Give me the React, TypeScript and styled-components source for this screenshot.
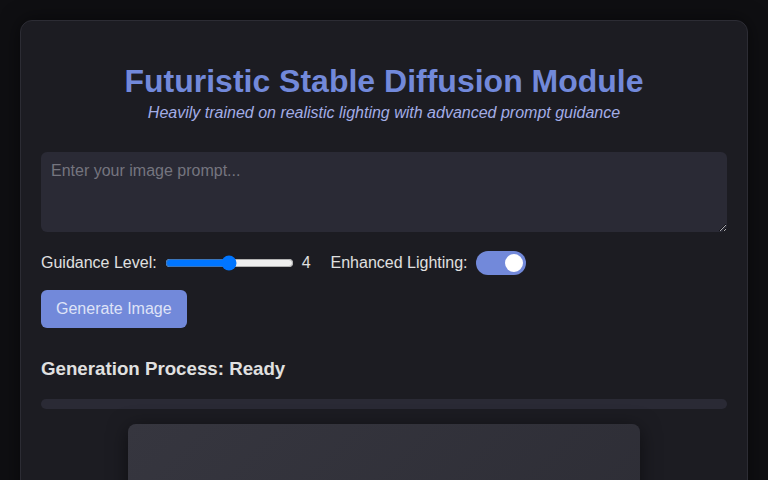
import React from 'react';
import styled, { createGlobalStyle } from 'styled-components';

const GlobalStyle = createGlobalStyle`
  html, body {
    margin: 0;
    padding: 0;
    background: #0f0f12;
    color: #e0e0e0;
    font-family: "Liberation Sans", Arial, sans-serif;
  }
  * { box-sizing: border-box; }
`;

const Page = styled.div`
  padding: 20px;
  min-height: 480px;
`;

const Card = styled.div`
  background: #1c1c22;
  border: 1px solid #2c2c34;
  border-radius: 12px;
  padding: 32px 20px 20px;
  box-shadow: 0 0 20px rgba(0, 0, 0, 0.5);
`;

const Header = styled.header`
  text-align: center;
  margin-bottom: 30px;
`;

const Title = styled.h1`
  margin: 10px 0 4px;
  font-size: 32px;
  font-weight: 700;
  color: #7289da;
`;

const Subtitle = styled.p`
  margin: 0;
  font-style: italic;
  font-size: 16px;
  color: #a3ade6;
`;

const Prompt = styled.textarea`
  display: block;
  width: 100%;
  height: 80px;
  padding: 10px;
  border: none;
  border-radius: 6px;
  background: #2a2a35;
  color: #e0e0e0;
  font-family: "Liberation Sans", Arial, sans-serif;
  font-size: 16px;
  resize: vertical;

  &::placeholder { color: #75757f; }
  &:focus { outline: none; }
`;

const Controls = styled.div`
  display: flex;
  align-items: center;
  gap: 20px;
  margin: 19px 0 15px;
`;

const Control = styled.label`
  display: flex;
  align-items: center;
  gap: 8px;
  font-size: 16px;
  color: #e0e0e0;
`;

const Range = styled.input`
  width: 129px;
  margin: 0;
`;

const Switch = styled.span<{ $on: boolean }>`
  position: relative;
  display: inline-block;
  width: 50px;
  height: 24px;
  border-radius: 12px;
  background: ${(p) => (p.$on ? '#7289da' : '#44444f')};
  cursor: pointer;

  &::after {
    content: '';
    position: absolute;
    top: 3px;
    left: ${(p) => (p.$on ? '29px' : '3px')};
    width: 18px;
    height: 18px;
    border-radius: 50%;
    background: #fff;
  }
`;

const Button = styled.button`
  padding: 10px 15px;
  border: none;
  border-radius: 6px;
  background: #7289da;
  color: #dfe3f7;
  font-family: "Liberation Sans", Arial, sans-serif;
  font-size: 16px;
  cursor: pointer;
`;

const StatusTitle = styled.h3`
  margin: 30px 0 19px;
  font-size: 18.72px;
  font-weight: 700;
  color: #e0e0e0;
`;

const Progress = styled.div`
  height: 10px;
  border-radius: 5px;
  background: #2a2a35;
  overflow: hidden;
`;

const Fill = styled.div`
  height: 100%;
  background: #7289da;
`;

const Preview = styled.div`
  width: 512px;
  height: 300px;
  margin: 15px auto 0;
  border-radius: 8px;
  background: linear-gradient(135deg, #36363f, #2b2b33);
  box-shadow: 0 4px 20px rgba(0, 0, 0, 0.5);
`;

export default function App() {
  const [level, setLevel] = React.useState(4);
  const [lighting, setLighting] = React.useState(true);
  const progress = 0;

  return (
    <>
      <GlobalStyle />
      <Page>
        <Card>
          <Header>
            <Title>Futuristic Stable Diffusion Module</Title>
            <Subtitle>Heavily trained on realistic lighting with advanced prompt guidance</Subtitle>
          </Header>
          <Prompt placeholder="Enter your image prompt..." />
          <Controls>
            <Control>
              Guidance Level:
              <Range
                type="range"
                min={1}
                max={7}
                value={level}
                onChange={(e) => setLevel(Number(e.target.value))}
              />
              <span>{level}</span>
            </Control>
            <Control onClick={() => setLighting(!lighting)}>
              Enhanced Lighting:
              <Switch $on={lighting} />
            </Control>
          </Controls>
          <Button>Generate Image</Button>
          <StatusTitle>Generation Process: Ready</StatusTitle>
          <Progress>
            <Fill style={{ width: `${progress}%` }} />
          </Progress>
          <Preview />
        </Card>
      </Page>
    </>
  );
}
